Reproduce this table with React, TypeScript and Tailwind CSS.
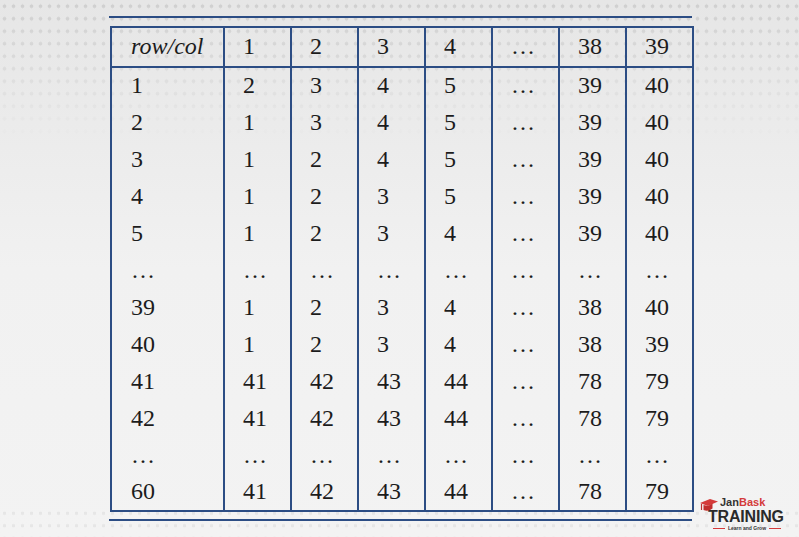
import React from 'react';

const cols = ['1', '2', '3', '4', '…', '38', '39'];

const rows: string[][] = [
  ['1', '2', '3', '4', '5', '…', '39', '40'],
  ['2', '1', '3', '4', '5', '…', '39', '40'],
  ['3', '1', '2', '4', '5', '…', '39', '40'],
  ['4', '1', '2', '3', '5', '…', '39', '40'],
  ['5', '1', '2', '3', '4', '…', '39', '40'],
  ['…', '…', '…', '…', '…', '…', '…', '…'],
  ['39', '1', '2', '3', '4', '…', '38', '40'],
  ['40', '1', '2', '3', '4', '…', '38', '39'],
  ['41', '41', '42', '43', '44', '…', '78', '79'],
  ['42', '41', '42', '43', '44', '…', '78', '79'],
  ['…', '…', '…', '…', '…', '…', '…', '…'],
  ['60', '41', '42', '43', '44', '…', '78', '79'],
];

const Logo: React.FC = () => (
  <div className="absolute left-[708px] top-[497px] w-[78px] font-['Liberation_Sans',sans-serif] leading-none">
    <svg width="20" height="16" viewBox="0 0 20 16" className="absolute left-[-9px] top-[1px]">
      <path d="M1 5 L11 1 L19 3.5 L9 8 Z" fill="#d43a3a" />
      <path d="M4.5 7 L4.5 12 Q9 14 13.5 10.5 L13.5 5.5 L9 8 Z" fill="#c12d2d" />
      <path d="M2.5 5.8 L2.5 12" stroke="#c12d2d" strokeWidth="1.2" />
    </svg>
    <div className="pl-[12px] text-[11px] font-bold text-[#333]">
      Jan<span className="text-[#d43a3a]">Bask</span>
    </div>
    <div className="mt-[1px] text-[16px] font-bold tracking-[-0.2px] text-[#2a2a2a]">TRAINING</div>
    <div className="mt-[1px] flex items-center justify-center gap-[3px]">
      <span className="w-[12px] h-px bg-[#d43a3a]" />
      <span className="text-[5px] font-bold text-[#333]">Learn and Grow</span>
      <span className="w-[12px] h-px bg-[#d43a3a]" />
    </div>
  </div>
);

const App: React.FC = () => {
  return (
    <div className="relative w-[799px] h-[537px] overflow-hidden bg-gradient-to-b from-[#e6e6e6] via-[#f1f1f1] to-[#f3f3f3]">
      <div className="absolute inset-x-0 top-0 h-[140px] bg-[radial-gradient(circle,#cfcfcf_1.6px,transparent_2.2px)] bg-[length:9px_12.5px] [mask-image:linear-gradient(to_bottom,black,transparent)]" />
      <div className="absolute inset-x-0 bottom-0 h-[30px] bg-[radial-gradient(circle,#e0e0e0_1.4px,transparent_2px)] bg-[length:9px_12.5px] opacity-70" />

      <div className="relative pt-4 pl-[109px] font-['Liberation_Serif',serif] text-[24px] leading-[30px] text-[#1c1c1c]">
        <div className="w-[583px] h-[2px] bg-[#2c4d84]" />
        <table className="mt-2 ml-px w-[582px] table-fixed border-collapse border-2 border-[#2c4d84]">
          <colgroup>
            <col className="w-[113px]" />
            {cols.map((c, i) => (
              <col key={i} className="w-[67px]" />
            ))}
          </colgroup>
          <thead>
            <tr className="h-[40px] border-b-2 border-[#2c4d84]">
              <th className="border-x-2 border-[#2c4d84] pl-[19px] pb-[3px] text-left font-normal italic">row/col</th>
              {cols.map((c, i) => (
                <th key={i} className="border-x-2 border-[#2c4d84] pl-[18px] pb-[3px] text-left font-normal">
                  {c}
                </th>
              ))}
            </tr>
          </thead>
          <tbody>
            {rows.map((r, ri) => (
              <tr key={ri} className="h-[37px]">
                {r.map((v, ci) => (
                  <td key={ci} className={`border-x-2 border-[#2c4d84] pb-[2px] text-left ${ci === 0 ? 'pl-[19px]' : 'pl-[18px]'}`}>
                    {v}
                  </td>
                ))}
              </tr>
            ))}
          </tbody>
        </table>
        <div className="mt-[7px] w-[583px] h-[2px] bg-[#2c4d84]" />
      </div>

      <Logo />
    </div>
  );
};

export default App;
